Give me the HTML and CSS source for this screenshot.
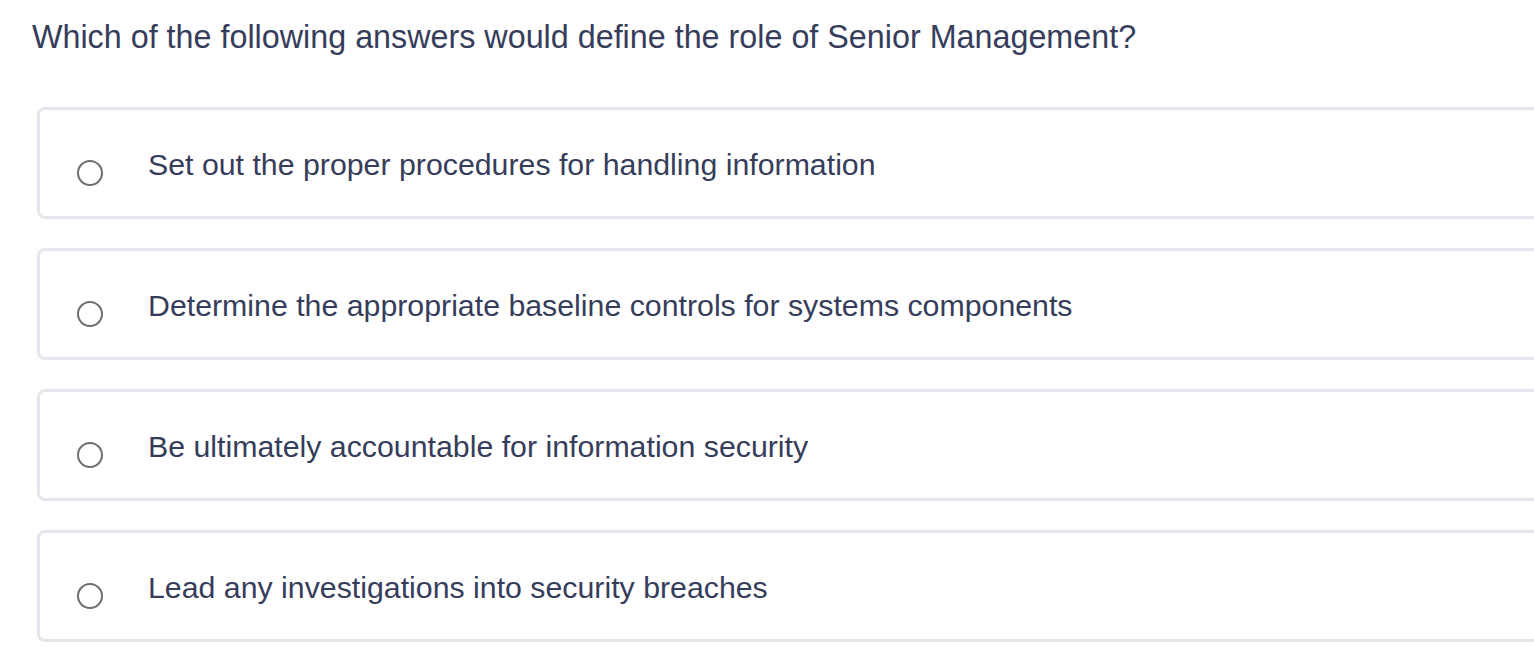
FILE: index.html
```html
<!DOCTYPE html>
<html>
<head>
<meta charset="utf-8">
<link rel="stylesheet" href="styles.css">
</head>
<body>
<div class="quiz">
  <h1 class="question">Which of the following answers would define the role of Senior Management?</h1>
  <div class="options">
    <label class="option"><span class="radio"></span><span class="text">Set out the proper procedures for handling information</span></label>
    <label class="option"><span class="radio"></span><span class="text">Determine the appropriate baseline controls for systems components</span></label>
    <label class="option"><span class="radio"></span><span class="text">Be ultimately accountable for information security</span></label>
    <label class="option"><span class="radio"></span><span class="text">Lead any investigations into security breaches</span></label>
  </div>
</div>
</body>
</html>
```
FILE: styles.css
```css
html, body {
  margin: 0;
  padding: 0;
  background: #ffffff;
  overflow: hidden;
}
.quiz {
  font-family: "Liberation Sans", Arial, sans-serif;
  color: #363d5b;
  padding: 17px 0 0 32px;
  width: 1600px;
}
.question {
  margin: 0;
  font-size: 32.3px;
  font-weight: normal;
  line-height: 40px;
}
.options {
  display: flex;
  flex-direction: column;
  gap: 29px;
  margin-top: 50px;
  margin-left: 5px;
}
.option {
  display: flex;
  align-items: center;
  height: 106px;
  border: 3px solid #e4e6ec;
  border-radius: 8px;
  padding-left: 37px;
}
.radio {
  width: 22px;
  height: 22px;
  border: 2px solid #6e6e6e;
  border-radius: 50%;
  flex: none;
  margin-top: 20px;
}
.text {
  margin-left: 45px;
  font-size: 30.3px;
  line-height: 36px;
  margin-top: 4px;
}
```
